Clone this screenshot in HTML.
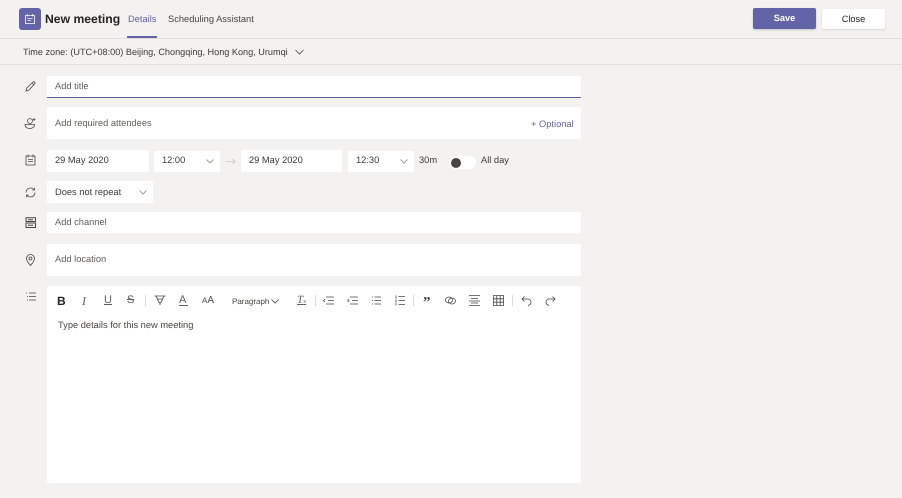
<!DOCTYPE html>
<html lang="en"><head><meta charset="utf-8"><title>New meeting</title>
<style>
html,body{margin:0;padding:0;background:#f3f2f1}
body{width:902px;height:498px;overflow:hidden;background:#f3f2f1;position:relative;font-family:"Liberation Sans",sans-serif;color:#252423;text-rendering:geometricPrecision}
#w{position:absolute;left:0;top:0;width:902px;height:498px;background:#f3f2f1;filter:blur(.3px)}
.a{position:absolute}
.t{position:absolute;font-size:9.3px;line-height:12px;white-space:nowrap;color:#3b3a39}
.g{color:#605e5c}
.b{position:absolute;background:#fff;border-radius:2px}
svg{position:absolute;overflow:visible;fill:none;stroke:#484644;stroke-width:.8}
.sep{position:absolute;top:295px;width:1px;height:11px;background:#dcdbda}
</style></head><body><div id="w">
<div class="a" style="left:0;top:38px;width:902px;height:1px;background:#e1dfdd"></div>
<div class="a" style="left:0;top:64px;width:902px;height:1px;background:#e1dfdd"></div>

<div class="a" style="left:19px;top:8px;width:22px;height:22px;background:#6264a7;border-radius:3px"></div>
<svg style="left:24px;top:13px" width="12" height="12" viewBox="0 0 12 12"><path stroke="#fff" d="M1.500 2.500h9v8h-9zM3.500 1v2.500M8.500 1v2.500"/><path stroke="#fff" d="M3.500 5.500h5M3.500 7.500h3.500"/></svg>
<div class="t" style="left:45px;top:12px;font-size:12.200px;line-height:15px;font-weight:bold;color:#252423">New meeting</div>
<div class="t" style="left:128px;top:13px;color:#6264a7">Details</div>
<div class="a" style="left:127px;top:36px;width:30px;height:2px;background:#6264a7"></div>
<div class="t" style="left:168px;top:13px;color:#484644">Scheduling Assistant</div>

<div class="a" style="left:753px;top:8px;width:63px;height:21px;background:#6264a7;border-radius:2px;box-shadow:0 1px 2px rgba(0,0,0,.2);color:#fff;font-size:9.200px;font-weight:bold;line-height:21px;text-align:center">Save</div>
<div class="a" style="left:822px;top:9px;width:63px;height:20px;background:#fff;border-radius:2px;box-shadow:0 1px 2px rgba(0,0,0,.12);color:#252423;font-size:9.200px;line-height:20px;text-align:center">Close</div>

<div class="t" style="left:23px;top:46px;font-size:9.150px">Time zone: (UTC+08:00) Beijing, Chongqing, Hong Kong, Urumqi</div>
<svg style="left:295px;top:49px" width="9" height="6" viewBox="0 0 9 6"><path d="M.5 1l4 4 4-4"/></svg>

<!-- side icons -->
<svg style="left:25px;top:81px" width="11" height="11" viewBox="0 0 11 11"><path d="M1 10l.8-3L8 1c.6-.5 1.300-.4 1.700.1s.5 1.200 0 1.700L3.800 9.200zM7 2l2 2"/></svg>
<svg style="left:24px;top:117px" width="13" height="13" viewBox="0 0 13 13"><circle cx="6" cy="4" r="2.400"/><path d="M1 7.500h9.500c0 2.500-2 4-4.700 4s-4.800-1.500-4.800-4zM10 1v3M8.500 2.500h3"/></svg>
<svg style="left:25px;top:154px" width="11" height="12" viewBox="0 0 11 12"><path d="M1 2h9v9H1zM3 .5v3M8 .5v3M3 5.500h5M3 7.500h5"/></svg>
<svg style="left:25px;top:187px" width="11" height="11" viewBox="0 0 11 11"><path d="M1 5.500C1 3 3 1 5.500 1c1.500 0 2.800.7 3.500 1.800M10 5.500C10 8 8 10 5.500 10 4 10 2.700 9.300 2 8.200M9.500 .8V3H7.300M1.500 10.200V8h2.200"/></svg>
<svg style="left:25px;top:217px" width="11" height="11" viewBox="0 0 11 11"><path stroke-width="1" d="M1 .8h9.500v3.700H1zM1 6h9.500v4.500H1zM3 2.700h5M3 8.200h5"/></svg>
<svg style="left:26px;top:254px" width="9" height="12" viewBox="0 0 9 12"><path d="M4.500 11.500C2.500 9 .5 7 .5 4.500a4 4 0 0 1 8 0c0 2.500-2 4.500-4 7z"/><circle cx="4.500" cy="4.500" r="1.500"/></svg>
<svg style="left:26px;top:292px" width="10" height="9" viewBox="0 0 10 9"><path d="M0 1h1M3 1h7M1 4.500h1M3 4.500h7M1 8h1M3 8h7"/></svg>

<!-- title -->
<div class="b" style="left:47px;top:76px;width:534px;height:22px"></div>
<div class="a" style="left:47px;top:97px;width:534px;height:1px;background:#5a5ca8"></div>
<div class="t g" style="left:55px;top:80px">Add title</div>
<!-- attendees -->
<div class="b" style="left:47px;top:107px;width:534px;height:32px"></div>
<div class="t g" style="left:55px;top:117px">Add required attendees</div>
<div class="t" style="left:531px;top:118px;color:#6264a7">+ Optional</div>
<!-- date row -->
<div class="b" style="left:47px;top:150px;width:102px;height:22px"></div>
<div class="t" style="left:55px;top:154px">29 May 2020</div>
<div class="b" style="left:154px;top:151px;width:66px;height:21px"></div>
<div class="t" style="left:162px;top:154px">12:00</div>
<svg style="left:206px;top:159px" width="8" height="5" viewBox="0 0 8 5"><path stroke="#8a8886" d="M.5.500L4 4 7.500.500"/></svg>
<svg style="left:226px;top:158px" width="10" height="7" viewBox="0 0 10 7"><path stroke="#c8c6c4" d="M0 3.500h9M6.500 1L9 3.500 6.500 6"/></svg>
<div class="b" style="left:241px;top:150px;width:101px;height:22px"></div>
<div class="t" style="left:249px;top:154px">29 May 2020</div>
<div class="b" style="left:348px;top:151px;width:66px;height:21px"></div>
<div class="t" style="left:356px;top:154px">12:30</div>
<svg style="left:400px;top:159px" width="8" height="5" viewBox="0 0 8 5"><path stroke="#8a8886" d="M.5.500L4 4 7.500.500"/></svg>
<div class="t" style="left:419px;top:154px">30m</div>
<div class="a" style="left:449px;top:156px;width:27px;height:13px;background:#fff;border-radius:7px"></div>
<div class="a" style="left:451px;top:157.500px;width:10px;height:10px;background:#484644;border-radius:50%"></div>
<div class="t" style="left:481px;top:154px">All day</div>
<!-- repeat -->
<div class="b" style="left:47px;top:181px;width:106px;height:22px"></div>
<div class="t" style="left:55px;top:186px">Does not repeat</div>
<svg style="left:139px;top:190px" width="8" height="5" viewBox="0 0 8 5"><path stroke="#8a8886" d="M.5.500L4 4 7.500.500"/></svg>
<!-- channel -->
<div class="b" style="left:47px;top:212px;width:534px;height:21px"></div>
<div class="t g" style="left:55px;top:216px">Add channel</div>
<!-- location -->
<div class="b" style="left:47px;top:244px;width:534px;height:32px"></div>
<div class="t g" style="left:55px;top:253px">Add location</div>
<!-- editor -->
<div class="b" style="left:47px;top:286px;width:534px;height:197px"></div>
<div class="t" style="left:57px;top:294px;font-size:12px;line-height:14px;font-weight:bold;color:#252423">B</div>
<div class="t" style="left:82px;top:294px;font-size:12px;line-height:14px;font-style:italic;font-family:'Liberation Serif',serif;color:#605e5c">I</div>
<div class="t" style="left:104px;top:294px;font-size:11px;line-height:13px;text-decoration:underline;color:#605e5c">U</div>
<div class="t" style="left:127px;top:294px;font-size:11px;line-height:13px;text-decoration:line-through;color:#605e5c">S</div>
<div class="sep" style="left:145px"></div>
<svg style="left:154px;top:295px" width="12" height="11" viewBox="0 0 12 11"><path d="M.5 1h11M2 1l3 6.500h2L10 1M3 4h6M6 7.500V10"/></svg>
<div class="t" style="left:179px;top:294px;font-size:11px;line-height:12px;color:#605e5c">A</div>
<div class="a" style="left:179px;top:305px;width:9px;height:1px;background:#605e5c"></div>
<div class="t" style="left:202px;top:296px;font-size:8px;line-height:10px;color:#484644">A<span style="font-size:10px">A</span></div>
<div class="t" style="left:232px;top:297px;font-size:8px;line-height:10px;color:#484644">Paragraph</div>
<svg style="left:271px;top:299px" width="8" height="5" viewBox="0 0 8 5"><path d="M.5.500L4 4 7.500.500"/></svg>
<div class="t" style="left:297px;top:294px;font-size:11px;line-height:13px;font-style:italic;text-decoration:underline;font-family:'Liberation Serif',serif;color:#605e5c">T<span style="font-size:6px;font-style:normal;text-decoration:none">x</span></div>
<div class="sep" style="left:315px"></div>
<svg style="left:323px;top:296px" width="11" height="9" viewBox="0 0 11 9"><path d="M3 1h8M5 4.500h6M3 8h8M2 3L.5 4.500 2 6"/></svg>
<svg style="left:347px;top:296px" width="11" height="9" viewBox="0 0 11 9"><path d="M3 1h8M5 4.500h6M3 8h8M.5 3L2 4.500.5 6"/></svg>
<svg style="left:372px;top:296px" width="9" height="9" viewBox="0 0 9 9"><path d="M0 1h1M2.500 1H9M0 4.500h1M2.500 4.500H9M0 8h1M2.500 8H9"/></svg>
<svg style="left:395px;top:295px" width="10" height="11" viewBox="0 0 10 11"><path d="M3.500 1.500H10M3.500 5.500H10M3.500 9.500H10M1 .5v3M1 4.500v3M1 8v2.500"/></svg>
<div class="sep" style="left:413px"></div>
<div class="t" style="left:423px;top:296px;font-size:15px;line-height:15px;font-weight:bold;font-family:'Liberation Serif',serif;color:#484644">”</div>
<svg style="left:445px;top:296px" width="11" height="9" viewBox="0 0 11 9"><ellipse cx="4" cy="4" rx="3.500" ry="3"/><ellipse cx="7" cy="5" rx="3.500" ry="3"/></svg>
<svg style="left:469px;top:295px" width="11" height="11" viewBox="0 0 11 11"><path d="M0 .5h11M2 3.500h7M0 6h11M2 8h7M0 10.500h11"/></svg>
<svg style="left:493px;top:295px" width="11" height="11" viewBox="0 0 11 11"><path d="M.5.500h10v10H.5zM3.800.500v10M7.200.500v10M.5 3.800h10M.5 7.200h10"/></svg>
<div class="sep" style="left:512px"></div>
<svg style="left:521px;top:296px" width="11" height="10" viewBox="0 0 11 10"><path d="M3.500.500L1 3l2.500 2.500M1 3h6a3 3 0 0 1 3 3c0 1.600-1 3-3 3.500"/></svg>
<svg style="left:545px;top:296px" width="11" height="10" viewBox="0 0 11 10"><path d="M7.500.500L10 3 7.500 5.500M10 3H4a3 3 0 0 0-3 3c0 1.600 1 3 3 3.500"/></svg>
<div class="t" style="left:58px;top:319px;color:#484644">Type details for this new meeting</div>
</div></body></html>
